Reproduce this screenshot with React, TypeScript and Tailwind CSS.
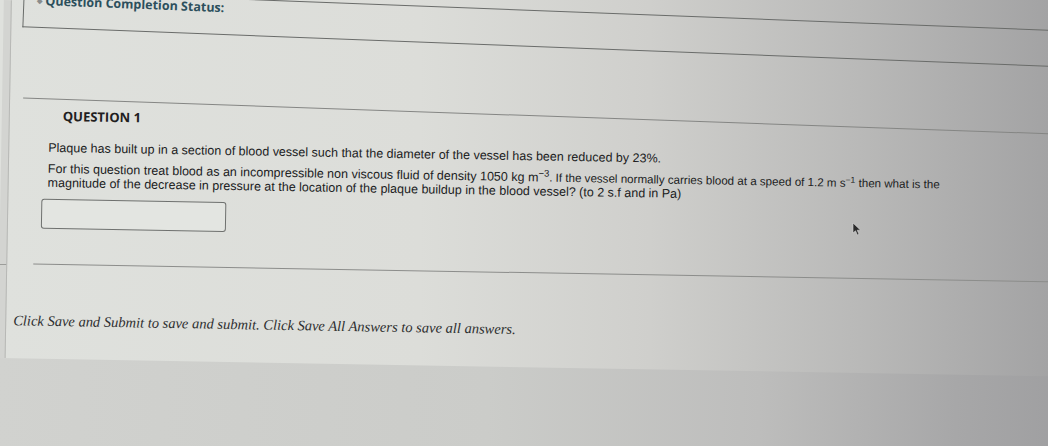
import React from "react";

// Photo of a Blackboard test page, drawn flat with a slight tilt
export default function App() {
  return (
    <div className="relative w-[1048px] h-[446px] overflow-hidden bg-[linear-gradient(90deg,#dfe1dd_0%,#dcddd9_40%,#cfcfcc_62%,#b9b9b8_82%,#a3a3a4_100%)] font-['Liberation_Sans',Arial,sans-serif]">
      <div className="w-[1090px] rotate-[1deg] origin-[0_220px]">
        <div className="flex h-[358px]">
          {/* Left page edge */}
          <div className="w-[8px] shrink-0 border-r border-[#b7b8b5] bg-[#d3d4d1] flex flex-col">
            <div className="h-[264px]" />
            <div className="border-t border-[#9c9d9a]" />
          </div>

          <div className="flex-1 flex flex-col">
            {/* Question Completion Status box */}
            <div className="ml-[11px] -mt-[10px] h-[37px] border border-r-0 border-[#6a6c6a] pl-[13px] pt-[1px] rotate-[1.2deg] origin-bottom-left">
              <div className="flex items-center gap-[3px] font-['Open_Sans',sans-serif] font-bold text-[12.5px] leading-[16px] text-[#2c4f5c]">
                <span className="text-[7px] text-[#8a8c8c]">◆</span>
                <span>Question Completion Status:</span>
              </div>
            </div>

            {/* Question separator */}
            <div className="mt-[70px] ml-[13px] border-t border-[#858684] rotate-[1deg] origin-left" />

            <div className="mt-[8px] pl-[53px] font-['Open_Sans',sans-serif] font-bold text-[13px] leading-[18px] text-[#1f2021]">
              QUESTION 1
            </div>

            <div className="mt-[16px] pl-[39px] text-[#202122]">
              <p className="text-[12.5px] leading-[14px]">
                Plaque has built up in a section of blood vessel such that the diameter of the vessel has been reduced by 23%.
              </p>
              <p className="mt-[7px] text-[12.5px] leading-[14px]">
                For this question treat blood as an incompressible non viscous fluid of density 1050 kg m
                <sup className="text-[9.5px]">−3</sup>
                <span className="text-[11.6px]">
                  . If the vessel normally carries blood at a speed of 1.2 m s
                  <sup className="text-[8.5px]">−1</sup> then what is the
                </span>
                <br />
                magnitude of the decrease in pressure at the location of the plaque buildup in the blood vessel? (to 2 s.f and in Pa)
              </p>
            </div>

            <div className="mt-[9px] ml-[33px] w-[185px] h-[30px] rounded-[3px] border border-[#6f716f] bg-[#e3e5e1]" />

            {/* Footer separator */}
            <div className="mt-[35px] ml-[26px] border-t border-[#8c8d8b]" />

            <p className="mt-[47px] ml-[7px] font-['Liberation_Serif',Georgia,serif] italic text-[14.5px] leading-[18px] text-[#2e2f30]">
              Click Save and Submit to save and submit. Click Save All Answers to save all answers.
            </p>
          </div>
        </div>

        {/* Lower grey panel */}
        <div className="h-[140px] bg-[linear-gradient(90deg,#d1d2cf_0%,#cbccc9_45%,#bdbdbc_70%,#a7a7a8_88%,#9d9d9f_100%)]" />
      </div>

      {/* Mouse pointer */}
      <svg className="absolute left-[852px] top-[222px]" width="10" height="14" viewBox="0 0 10 14">
        <path d="M1 1 L1 11 L3.5 8.8 L5.4 13 L7 12.3 L5.2 8.2 L8.6 8.2 Z" fill="#2a2a2a" stroke="#d8d8d8" strokeWidth="0.6" />
      </svg>
    </div>
  );
}
